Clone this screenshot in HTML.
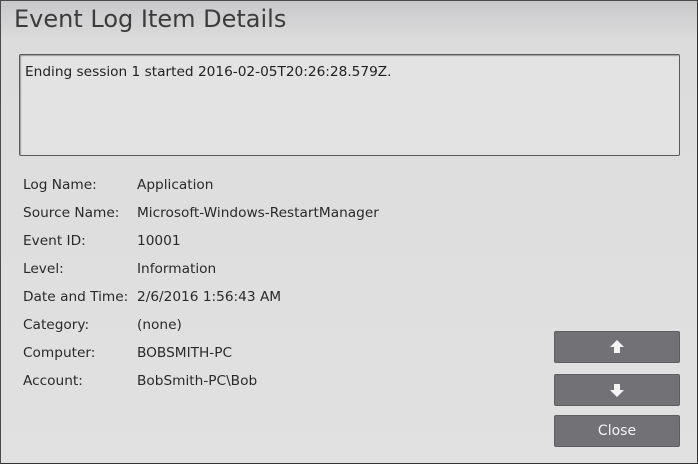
<!DOCTYPE html><html><head><style>
body{margin:0;width:698px;height:464px;overflow:hidden;font-family:"DejaVu Sans",sans-serif;}
.w{position:absolute;left:0;top:0;width:696px;height:462px;border:1px solid #4a4a4a;border-right-color:#333;border-bottom-color:#333;background:linear-gradient(#c9c9cc 0px,#dcdcdc 40px,#e1e1e1 464px);}
.t{position:absolute;left:13px;top:4px;font-size:24px;color:#3c3c3c;}
.box{position:absolute;left:18px;top:53px;width:659px;height:100px;border:1px solid #5a5a5a;border-radius:2px;background:#e3e3e3;box-shadow:inset 1px 1px 1px #999;}
.box span{position:absolute;left:5px;top:9px;font-size:13.7px;color:#222;}
.r{position:absolute;font-size:13.7px;color:#2a2a2a;}
.b{position:absolute;left:553px;width:124px;height:30px;border:1px solid #5e5e62;border-radius:2px;background:#727276;color:#f4f4f4;font-size:14px;text-align:center;line-height:30px;}
</style></head><body><div class="w">
<div class="t">Event Log Item Details</div>
<div class="box"><span>Ending session 1 started 2016-02-05T20:26:28.579Z.</span></div>
<div class="r" style="left:22px;top:176px">Log Name:</div><div class="r" style="left:136px;top:176px">Application</div>
<div class="r" style="left:22px;top:204px">Source Name:</div><div class="r" style="left:136px;top:204px">Microsoft-Windows-RestartManager</div>
<div class="r" style="left:22px;top:232px">Event ID:</div><div class="r" style="left:136px;top:232px">10001</div>
<div class="r" style="left:22px;top:260px">Level:</div><div class="r" style="left:136px;top:260px">Information</div>
<div class="r" style="left:22px;top:288px">Date and Time:</div><div class="r" style="left:136px;top:288px">2/6/2016 1:56:43 AM</div>
<div class="r" style="left:22px;top:316px">Category:</div><div class="r" style="left:136px;top:316px">(none)</div>
<div class="r" style="left:22px;top:344px">Computer:</div><div class="r" style="left:136px;top:344px">BOBSMITH-PC</div>
<div class="r" style="left:22px;top:372px">Account:</div><div class="r" style="left:136px;top:372px">BobSmith-PC\Bob</div>
<div class="b" style="top:330px"><svg width="16" height="16" viewBox="0 0 16 16" style="vertical-align:middle"><path d="M8 1L15 8H11V14H5V8H1Z" fill="#f4f4f4"/></svg></div>
<div class="b" style="top:373px"><svg width="16" height="16" viewBox="0 0 16 16" style="vertical-align:middle"><path d="M8 15L15 8H11V2H5V8H1Z" fill="#f4f4f4"/></svg></div>
<div class="b" style="top:414px;padding-top:1px;height:29px;line-height:29px">Close</div>
</div></body></html>
